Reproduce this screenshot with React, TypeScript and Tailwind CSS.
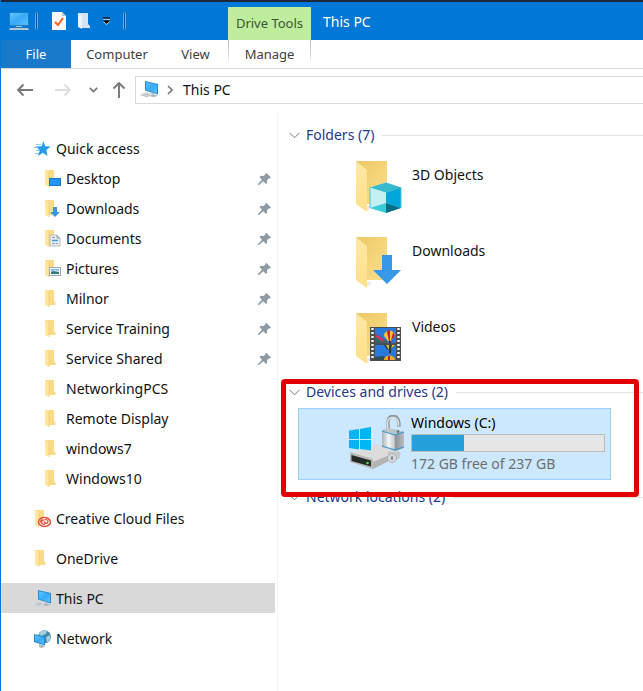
import React from "react";

type IconProps = { className?: string };

function SharedGradients() {
  return (
    <svg className="absolute size-0" aria-hidden="true">
      <defs>
        <linearGradient id="folderBack" x1="0" y1="0" x2="1" y2="1">
          <stop offset="0" stopColor="#ecc865" />
          <stop offset="1" stopColor="#fbe08c" />
        </linearGradient>
        <linearGradient id="folderFront" x1="0" y1="0" x2="0" y2="1">
          <stop offset="0" stopColor="#ffe9a6" />
          <stop offset="1" stopColor="#ffdf88" />
        </linearGradient>
        <linearGradient id="screenBlue" x1="0" y1="0" x2="1" y2="1">
          <stop offset="0" stopColor="#61c6ff" />
          <stop offset="0.5" stopColor="#37aaf8" />
          <stop offset="1" stopColor="#58bfff" />
        </linearGradient>
        <linearGradient id="metal" x1="0" y1="0" x2="1" y2="0">
          <stop offset="0" stopColor="#a9b0b5" />
          <stop offset="0.3" stopColor="#f4f6f7" />
          <stop offset="0.55" stopColor="#c9ced1" />
          <stop offset="0.62" stopColor="#8b9298" />
          <stop offset="1" stopColor="#b9bfc3" />
        </linearGradient>
      </defs>
    </svg>
  );
}

type Badge = "desktop" | "download" | "document" | "picture" | "cloud";

function SmallFolder({ badge }: { badge?: Badge }) {
  return (
    <svg viewBox="0 0 18 18" className="h-[18px] w-[18px] shrink-0" aria-hidden="true">
      <path d="M2 0h9v11l1.500 1.500V15H5z" fill="#f8db84" />
      <path d="M2 0l4 2v15l-4-2z" fill="#ffe7a0" />
      <path d="M6 2.500V17" stroke="#e9c66b" strokeWidth=".6" />
      {badge === "desktop" && (
        <>
          <rect x="6" y="8" width="12" height="8" fill="#1479cd" />
          <path d="M7 9h10v6H7z" fill="#2397f0" />
        </>
      )}
      {badge === "download" && <path d="M10 7h4v5h3l-5 5-5-5h3z" fill="#3795e2" />}
      {badge === "document" && (
        <>
          <path d="M7 5h7l3 3v8H7z" fill="#e8edf1" stroke="#a7b0b7" strokeWidth=".8" />
          <path d="M14 5v3h3M9 7.500h3" fill="none" stroke="#919da7" />
          <path d="M9 10.500h6" stroke="#469dd0" strokeWidth="1.500" />
          <path d="M9 13.500h3M13 13.500h2" stroke="#919da7" />
        </>
      )}
      {badge === "picture" && (
        <>
          <rect x="6.500" y="7.500" width="11" height="8" fill="#eef7fd" stroke="#a3abb1" />
          <path d="M8 9h8v2l-4-1-4 2z" fill="#78b9e8" />
          <path d="M8 12l3-1 5 1v2H8z" fill="#367a7d" />
        </>
      )}
      {badge === "cloud" && (
        <>
          <ellipse cx="11.500" cy="12" rx="6" ry="4.500" fill="#fff" stroke="#e94b38" strokeWidth="1.500" />
          <path d="M12 13.500a2 2 0 1 1-1.500-3.300M9.500 13a1.500 1.500 0 1 1 1-2.200M11 11.500l2 2a2 2 0 1 0-1.500-3.300" fill="none" stroke="#e94b38" strokeWidth="1.200" />
        </>
      )}
    </svg>
  );
}

function StarIcon() {
  return (
    <svg viewBox="0 0 18 18" className="h-[18px] w-[18px] shrink-0" aria-hidden="true">
      <path d="M10.500 1l1.700 5.300 5.500.2-4.400 3.500 1.200 6-4.600-3.300L5 16l1.800-5.800L2.500 6.500l6-.2z" fill="#239cea" />
      <path d="M3 4.500h5M1 7.500h5M3 10.500h4M2 13.500h4" stroke="#63bdf4" strokeWidth=".8" />
    </svg>
  );
}

function PcIcon({ className = "h-[18px] w-5" }: IconProps) {
  return (
    <svg viewBox="0 0 20 18" className={`${className} shrink-0`} aria-hidden="true">
      <path d="M5 0l13 3v10.500L5 9.500z" fill="#2789cf" />
      <path d="M6 1.300l11 2.500v8.500L6 9z" fill="url(#screenBlue)" />
      <path d="M11 11l3 1v1.600l4 1-4 1.600-4-1z" fill="#afbbc2" />
      <path d="M-1 14l6-3 8 2-5 3.500z" fill="#dce1e4" />
      <path d="M1 14l7 1.600M3 12.700l8 1.800M3 15l5-3M5.500 15.800l4-3" stroke="#a9b4bb" strokeWidth=".6" />
    </svg>
  );
}

function NetworkIcon() {
  return (
    <svg viewBox="0 0 20 18" className="h-[18px] w-5 shrink-0" aria-hidden="true">
      <circle cx="11.500" cy="6.800" r="6.500" fill="#4387a8" />
      <path d="M6 4c2-4 6-4 8-3l-1 3-3 1-1 2zM13 7l4-2c1 3 0 5-3 8z" fill="#a6d2df" />
      <path d="M1 4l11 2.500v9L1 12z" fill="#2688c8" />
      <path d="M2 5.200l9 2.100v6.900l-9-2.900z" fill="url(#screenBlue)" />
      <path d="M6 14l4 1 2 2-4 1-2-1z" fill="#aeb9c0" />
    </svg>
  );
}

function PinIcon() {
  return (
    <svg viewBox="0 0 14 14" className="size-3.5 shrink-0" aria-hidden="true">
      <path d="M8.500 1L13 5.500l-1 1-1-.2-2 2 .2 2.500-1.200 1.200-2.700-2.800L1 13H0v-1l4-4.300L1.500 5l1.200-1.200L5.500 4l2.300-2-.3-1z" fill="#8e9ba5" />
    </svg>
  );
}

function ChevronDown({ className = "w-[11px]" }: IconProps) {
  return (
    <svg viewBox="0 0 11 7" className={`${className} shrink-0`} aria-hidden="true">
      <path d="M.5.8l5 5 5-5" fill="none" stroke="currentColor" />
    </svg>
  );
}

function Arrow({ direction, className }: { direction: "left" | "right" | "up"; className: string }) {
  const turns = { left: "rotate(0 8 8)", right: "rotate(180 8 8)", up: "rotate(90 8 8)" };
  return (
    <svg viewBox="0 0 16 16" className={className} aria-hidden="true">
      <g transform={turns[direction]} fill="none" stroke="currentColor" strokeWidth="1.900">
        <path d="M1 8h15M6.500 2.500L1 8l5.500 5.500" />
      </g>
    </svg>
  );
}

function LargeIcon({ kind }: { kind: string }) {
  return (
    <svg viewBox="0 0 50 54" className="h-[54px] w-[50px] shrink-0" aria-hidden="true">
      <path d="M1 2h31v43H8z" fill="url(#folderBack)" />
      <path d="M1 2l11 9v42L1 45z" fill="url(#folderFront)" />
      <path d="M12 47h5l-5 5z" fill="#e8e8e8" />
      {kind === "3D Objects" && (
        <>
          <path d="M15 28.500l16-5 15 5V49l-15 5-16-5z" fill="#c4f0f1" />
          <path d="M15 28.500l16-5 15 5-15 5z" fill="#35b9cd" />
          <path d="M31 33.500l15-5V49l-15-5z" fill="#00a6da" />
          <path d="M15 49l16-5v10z" fill="#39cbd7" />
          <path d="M31 44l15 5-15 5z" fill="#006f83" />
          <path d="M15 28.500V49M46 28.500V49" stroke="#4cc6db" />
        </>
      )}
      {kind === "Downloads" && <path d="M27 20h10v15h9L32 49 18 35h9z" fill="#3798e8" />}
      {kind === "Videos" && (
        <>
          <rect x="15" y="16" width="31" height="34" fill="#4b4d50" />
          <rect x="20" y="17" width="21" height="15" fill="#2879dd" />
          <rect x="20" y="34" width="21" height="15" fill="#2879dd" />
          <path d="M17.500 17v32M43.500 17v32" stroke="#f2f2f2" strokeWidth="2.500" strokeDasharray="2 2" />
          <path d="M20 23l4 1 5 4 3 1v3H20z" fill="#35636b" />
          <path d="M20 25l3-1 5 4 2 3-4-1z" fill="#d4346a" />
          <path d="M29 25c0-7 11-7 11 0l-4 5h-3z" fill="#fbc529" />
          <path d="M32 21c1-3 3-3 3 0v9h-1zM38 21l2 4-4 5z" fill="#bd2536" />
          <path d="M34 30h2v2h-2z" fill="#412c24" />
          <path d="M29 34h11l-4 5h-3z" fill="#293b35" />
          <path d="M31 34h3v5zM37 34h3l-4 4z" fill="#e4bf35" />
          <path d="M34 39h2v3h-2z" fill="#412c24" />
          <path d="M20 46l9-1 2 4H20z" fill="#304c58" />
          <path d="M29 49c0-6 11-6 11 0z" fill="#e9ac22" />
          <path d="M33 45h2v4h-2z" fill="#bd2536" />
        </>
      )}
    </svg>
  );
}

function DriveIcon() {
  return (
    <svg viewBox="0 0 56 56" className="size-14 shrink-0" aria-hidden="true">
      <path d="M1 39l26-10 23 7-26 16z" fill="#dcdcdc" />
      <path d="M24 47l26-11v5L24 54z" fill="#b5b4b3" />
      <path d="M1 37l23 7v10L1 47z" fill="#bab9b8" />
      <path d="M2.500 40L22 45.500v6L2.500 46z" fill="#252928" />
      <circle cx="18.500" cy="48" r="1.300" fill="#48e052" />
      <path d="M0 15.500l10-1.500v10H0zM11 14l11-2v12H11zM0 25h10v9.500L0 33zM11 25h11v10.500L11 34z" fill="#00b6f4" />
      <path d="M39 18V8c0-9 11-9 11 0v4" fill="none" stroke="#92999e" strokeWidth="3.500" transform="rotate(-4 44 10)" />
      <path d="M38.500 16V8c0-7.500 11-7.500 11 0v3" fill="none" stroke="#e3e7e9" strokeWidth="1.500" transform="rotate(-4 44 10)" />
      <path d="M33 15l7-2 15 4v16l-9 3-13-4z" fill="url(#metal)" />
      <path d="M33 15l7-2 15 4-9 2.500z" fill="#bdc6ca" />
      <path d="M33 16l13 4 9-3M33 31l13 4 9-3" fill="none" stroke="#3e99ca" strokeWidth="1.300" />
      <circle cx="49" cy="16.500" r="1.500" fill="#727c82" />
      <path d="M39 36l9 1 4 1-2 6-6 2-5-4z" fill="#c5c9cb" />
      <circle cx="43" cy="43" r="4.500" fill="#d3d7d9" stroke="#a3abb0" strokeWidth=".8" />
      <ellipse cx="43" cy="43" rx="1" ry="2" fill="#72808a" />
    </svg>
  );
}

function TitleBar() {
  return (
    <header className="flex h-10 items-stretch border-t-2 border-[#20263b] bg-[#0078d7]">
      <div className="flex w-[227px] shrink-0 items-center pl-2">
        <svg viewBox="0 0 20 20" className="size-5" aria-hidden="true">
          <rect x="0" y="1" width="20" height="14" fill="#1b7fbd" />
          <rect x="1" y="2" width="18" height="12" fill="url(#screenBlue)" />
          <path d="M7 15h6v1H7zM1 17h18l1 2H0z" fill="#bac7d0" />
        </svg>
        <span className="ml-1.5 h-[18px] w-[3px] rounded-sm border border-[#64b0e9] bg-[#05548f]" />
        <button type="button" aria-label="Properties" className="ml-3.5">
          <svg viewBox="0 0 14 18" className="h-[18px] w-3.5" aria-hidden="true">
            <path d="M0 0h10l4 4v14H0z" fill="#f7f9fb" />
            <path d="M10 0v4h4" fill="#b9c4cc" />
            <path d="M3 10l3 3 5-7" fill="none" stroke="#f26524" strokeWidth="2" />
          </svg>
        </button>
        <button type="button" aria-label="New folder" className="ml-3">
          <svg viewBox="0 0 12 18" className="h-[18px] w-3" aria-hidden="true">
            <path d="M0 1h10v11l2 2v2H4z" fill="#d6e3f2" />
            <path d="M0 1l4 2v14l-4-2z" fill="#edf3fb" />
          </svg>
        </button>
        <button type="button" aria-label="Customize Quick Access Toolbar" className="ml-3">
          <svg viewBox="0 0 9 8" className="h-2 w-[9px]" aria-hidden="true">
            <path d="M1 1h7" stroke="#000" strokeWidth="1.300" />
            <path d="M1 2.300h7" stroke="#eee" strokeWidth=".8" />
            <path d="M1 4.500h7L4.500 8z" fill="#ddd" />
            <path d="M1 3.500h7L4.500 7z" fill="#000" />
          </svg>
        </button>
        <span className="ml-3 h-[18px] w-[3px] rounded-sm border border-[#64b0e9] bg-[#05548f]" />
      </div>
      <div className="mt-[5px] flex w-[83px] shrink-0 items-center justify-center bg-[#bfed9e] text-[13px] text-[#3b5534]">
        Drive Tools
      </div>
      <h1 className="pt-2.5 pl-3 text-sm text-white">This PC</h1>
    </header>
  );
}

function RibbonTabs() {
  return (
    <nav className="flex h-[29px] border-b border-[#d9dadb] text-[13px] text-[#3e3e3e]">
      <button type="button" className="w-[70px] bg-[#1979ca] text-white">File</button>
      <button type="button" className="w-[92px]">Computer</button>
      <button type="button" className="w-[65px]">View</button>
      <div className="flex h-[22px] w-[83px] justify-between">
        <span className="w-px bg-linear-to-b from-[#bbbbbb] to-[#eeeeee]" />
        <button type="button" className="h-7">Manage</button>
        <span className="w-px bg-linear-to-b from-[#bbbbbb] to-[#eeeeee]" />
      </div>
    </nav>
  );
}

function AddressBar() {
  return (
    <div className="flex h-[42px] items-center text-[#777777]">
      <button type="button" aria-label="Back" className="ml-4">
        <Arrow direction="left" className="size-4" />
      </button>
      <button type="button" aria-label="Forward" disabled className="ml-[22px] text-[#dddddd]">
        <Arrow direction="right" className="size-4" />
      </button>
      <button type="button" aria-label="Recent locations" className="ml-[18px]">
        <svg viewBox="0 0 9 6" className="h-1.5 w-[9px]" aria-hidden="true">
          <path d="M.8.8l3.700 3.700L8.200.8" fill="none" stroke="currentColor" strokeWidth="1.700" />
        </svg>
      </button>
      <button type="button" aria-label="Up" className="ml-[13px]">
        <Arrow direction="up" className="size-4" />
      </button>
      <div className="ml-2 flex h-7 flex-1 items-center border border-r-0 border-[#d9d9d9] pl-1">
        <PcIcon />
        <svg viewBox="0 0 6 10" className="ml-[7px] h-2.5 w-1.5" aria-hidden="true">
          <path d="M1 1l4 4-4 4" fill="none" stroke="#777" strokeWidth="1.600" />
        </svg>
        <button type="button" className="ml-2.5 text-sm text-[#111111]">This PC</button>
      </div>
    </div>
  );
}

type Entry = { name: string; badge?: Badge; pinned?: boolean };

const quickAccess: Entry[] = [
  { name: "Desktop", badge: "desktop", pinned: true },
  { name: "Downloads", badge: "download", pinned: true },
  { name: "Documents", badge: "document", pinned: true },
  { name: "Pictures", badge: "picture", pinned: true },
  { name: "Milnor", pinned: true },
  { name: "Service Training", pinned: true },
  { name: "Service Shared", pinned: true },
  { name: "NetworkingPCS" },
  { name: "Remote Display" },
  { name: "windows7" },
  { name: "Windows10" },
];

function NavRow({ icon, name, nested, selected, pinned }: {
  icon: React.ReactNode;
  name: string;
  nested?: boolean;
  selected?: boolean;
  pinned?: boolean;
}) {
  return (
    <button
      type="button"
      aria-current={selected ? "page" : undefined}
      className={`flex h-[30px] w-full items-center pt-0.5 pr-[3px] text-left ${nested ? "pl-[42px]" : "pl-8"} ${selected ? "bg-[#d9d9d9]" : ""}`}
    >
      <span className="flex w-[23px] shrink-0">{icon}</span>
      <span className="flex-1">{name}</span>
      {pinned && <PinIcon />}
    </button>
  );
}

function Sidebar() {
  return (
    <aside className="flex w-[274px] shrink-0 flex-col gap-2.5 pt-[22px]">
      <div>
        <NavRow icon={<StarIcon />} name="Quick access" />
        {quickAccess.map((item) => (
          <NavRow key={item.name} nested icon={<SmallFolder badge={item.badge} />} name={item.name} pinned={item.pinned} />
        ))}
      </div>
      <NavRow icon={<SmallFolder badge="cloud" />} name="Creative Cloud Files" />
      <NavRow icon={<SmallFolder />} name="OneDrive" />
      <NavRow icon={<PcIcon />} name="This PC" selected />
      <NavRow icon={<NetworkIcon />} name="Network" />
    </aside>
  );
}

function GroupHeading({ title }: { title: string }) {
  return (
    <h2 className="flex h-6 items-center gap-2">
      <button type="button" className="flex items-center gap-1.5 text-[#25378b]">
        <ChevronDown className="w-[11px] text-[#777777]" />
        {title}
      </button>
      <span className="h-px flex-1 bg-[#e2e2e2]" />
    </h2>
  );
}

function DriveTile() {
  return (
    <button type="button" className="ml-[9px] flex h-[72px] w-[313px] items-start border border-[#99d1ff] bg-[#cce8ff] pl-[50px] text-left">
      <span className="mt-1.5"><DriveIcon /></span>
      <span className="mr-[5px] ml-1.5 flex flex-1 flex-col">
        <span className="mt-1 leading-5 text-black">Windows (C:)</span>
        <span
          role="meter"
          aria-label="Used space on Windows (C:)"
          aria-valuemin={0}
          aria-valuemax={237}
          aria-valuenow={65}
          className="mt-px flex h-[18px] border border-[#bcbcbc] bg-[#e6e6e6]"
        >
          <span className="w-[27%] bg-[#26a0da]" />
        </span>
        <span className="mt-0.5 leading-5 text-[#6d6d6d]">172 GB free of 237 GB</span>
      </span>
    </button>
  );
}

function Content() {
  return (
    <main className="mt-0.5 min-w-0 flex-1 border-l border-[#f3f3f3] pt-2.5 pl-[11px]">
      <GroupHeading title="Folders (7)" />
      <ul className="mt-3 pl-[66px]">
        {["3D Objects", "Downloads", "Videos"].map((name) => (
          <li key={name} className="h-19 last:h-[69px]">
            <button type="button" className="flex items-start text-left">
              <LargeIcon kind={name} />
              <span className="mt-1.5 ml-[7px] leading-5">{name}</span>
            </button>
          </li>
        ))}
      </ul>
      <div className="relative">
        <GroupHeading title="Devices and drives (2)" />
        <div className="mt-1">
          <DriveTile />
        </div>
        <div className="pointer-events-none absolute -top-px right-1 -bottom-[17px] -left-2 rounded-sm border-5 border-[#e30000]" />
      </div>
      <div className="mt-[5px]">
        <GroupHeading title="Network locations (2)" />
      </div>
    </main>
  );
}

export default function App() {
  return (
    <div className="flex min-h-screen flex-col overflow-hidden border-l border-[#0078d7] bg-white font-['Noto_Sans','Open_Sans',sans-serif] text-sm text-[#111111]">
      <SharedGradients />
      <TitleBar />
      <RibbonTabs />
      <AddressBar />
      <div className="flex flex-1 gap-0.5">
        <Sidebar />
        <Content />
      </div>
    </div>
  );
}
